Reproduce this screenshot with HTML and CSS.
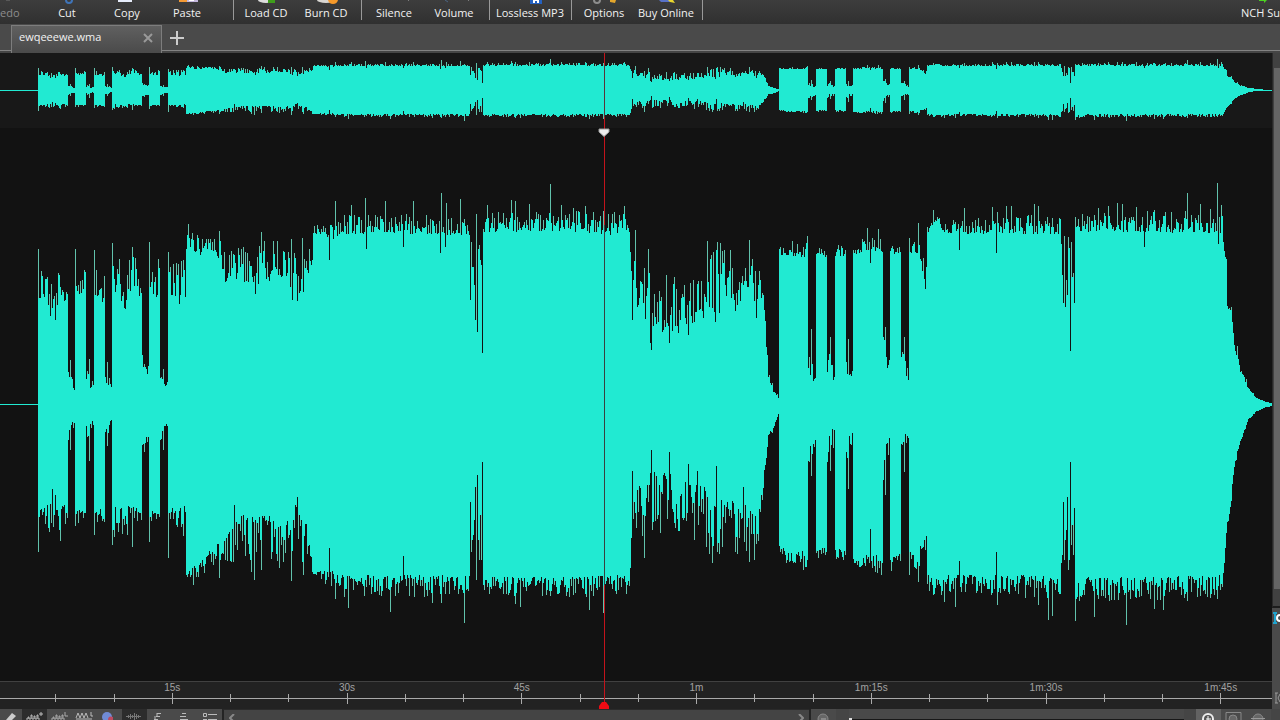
FILE: index.html
```html
<!DOCTYPE html>
<html lang="en">
<head>
<meta charset="utf-8">
<title>ewqeeewe.wma</title>
<link rel="stylesheet" href="styles.css">
</head>
<body>
<div class="app">
  <header class="toolbar">
    <button class="tool dim"><svg class="ticon" viewBox="0 0 30 6"><path d="M14 0h4" stroke="#777"/></svg>Redo</button>
    <button class="tool"><svg class="ticon" viewBox="0 0 30 6"><circle cx="17" cy="0" r="3" fill="none" stroke="#3f74b8" stroke-width="2"/></svg>Cut</button>
    <button class="tool"><svg class="ticon" viewBox="0 0 30 6"><path d="M6 0h14v2H6z" fill="#e6ecfa"/></svg>Copy</button>
    <button class="tool"><svg class="ticon" viewBox="0 0 30 6"><path d="M7 0h8v2H7z" fill="#f39a35"/><path d="M15 0h11v2H15z" fill="#c3b7dc"/><path d="M17 0h5v1h-5z" fill="#fff"/></svg>Paste</button>
    <span class="sep after-edit"></span>
    <button class="tool"><svg class="ticon" viewBox="0 0 30 6"><ellipse cx="15" cy="0" rx="8" ry="3" fill="#ddd"/><path d="M17 0h7v3h-7z" fill="#3f9d1b"/></svg>Load CD</button>
    <button class="tool"><svg class="ticon" viewBox="0 0 30 6"><ellipse cx="15" cy="0" rx="9" ry="3" fill="#d9d6d2"/><path d="M17 0h10q-1 4-5 4t-5-4" fill="#f6992a"/></svg>Burn CD</button>
    <span class="sep after-pair"></span>
    <button class="tool"><svg class="ticon" viewBox="0 0 30 6"><path d="M29 0h1" stroke="#bbb"/></svg>Silence</button>
    <button class="tool"><svg class="ticon" viewBox="0 0 30 6"><path d="M6 0l3 2" stroke="#4b6582"/><path d="M29 0h1" stroke="#bbb"/></svg>Volume</button>
    <span class="sep after-pair"></span>
    <button class="tool wide"><svg class="ticon" viewBox="0 0 30 6"><path d="M15 0h12v4H15z" fill="#2461c0"/><path d="M18 0h6v3h-6z" fill="#fff"/><path d="M20 1h2v2h-2z" fill="#2461c0"/></svg>Lossless MP3</button>
    <span class="sep after-wide"></span>
    <button class="tool"><svg class="ticon" viewBox="0 0 30 6"><circle cx="8" cy="0" r="3" fill="none" stroke="#8d8d8d" stroke-width="2"/><path d="M21 0h6l-1 3-5-1z" fill="#e3a62c"/></svg>Options</button>
    <button class="tool buy"><svg class="ticon" viewBox="0 0 30 6"><path d="M8 0h14v2H10z" fill="#5872c8"/><path d="M17 0h5l2 3-5-1z" fill="#ead72e"/></svg>Buy Online</button>
    <span class="sep after-buy"></span>
    <button class="tool suite"><svg class="ticon" viewBox="0 0 30 6"><path d="M7 0h8l-3 3v-2H7z" fill="#4bd321"/></svg>NCH Suite</button>
  </header>

  <nav class="tabs">
    <div class="tab"><button class="tab-name">ewqeeewe.wma</button><button class="icon-btn" aria-label="Close tab"><svg width="10" height="10" viewBox="0 0 10 10"><path d="M1 1l8 8M9 1L1 9" stroke="#999" stroke-width="2"/></svg></button></div>
    <button class="icon-btn add" aria-label="New tab"><svg width="14" height="14" viewBox="0 0 14 14"><path d="M7 0v14M0 7h14" stroke="#ccc" stroke-width="2"/></svg></button>
  </nav>

  <div class="work">
    <main class="stage">
      <svg class="overview" id="overview" viewBox="0 0 1272 75" preserveAspectRatio="none"></svg>
      <svg class="wave" id="wave" viewBox="0 0 1272 553" preserveAspectRatio="none"></svg>
      <svg class="ruler" id="ruler"></svg>
      <div class="playhead">
        <svg class="grip" viewBox="0 0 12 9"><path d="M1 1h10v3L6 8.500 1 4z" fill="#eee" stroke="#999"/></svg>
        <svg class="foot" viewBox="0 0 10 7"><path d="M0 7V4L3 0h4l3 4v3z" fill="#ee0b14"/></svg>
      </div>
    </main>
    <aside class="rail">
      <div class="track"><div class="thumb"></div></div>
      <div class="vtools">
        <svg width="7" height="14" viewBox="0 0 7 14"><path d="M2 2v10M0 2h4M0 12h4" stroke="#20a3cd" stroke-width="2"/><circle cx="7" cy="7" r="3" fill="none" stroke="#fff" stroke-width="2"/></svg>
        <svg width="5" height="14" viewBox="0 0 5 14"><path d="M1 2v10M0 2h3M0 12h3M5 3L3 7l2 4" fill="none" stroke="#999"/></svg>
      </div>
    </aside>
  </div>

  <footer class="bottom">
    <button class="mode first" aria-label="Edit"><svg viewBox="0 0 25 11"><path d="M6 11l6-7 4 3-4 4z" fill="#ccc"/></svg></button>
    <button class="mode on" aria-label="Wave"><svg viewBox="0 0 25 11"><path d="M4 10h2V8h1v2h2V6h1v4h2V7h1v3h2V6h1v4h2M17 5h4M19 3v4" fill="none" stroke="#bbb"/></svg></button>
    <button class="mode" aria-label="Wave left"><svg viewBox="0 0 25 11"><path d="M4 10h2V8h1v2h2V6h1v4h2V7h1v3h2V6h1v4h2M18 3v4h3" fill="none" stroke="#aaa"/></svg></button>
    <button class="mode" aria-label="Peaks"><svg viewBox="0 0 25 11"><path d="M4 9l2-5 2 5 2-5 2 5 2-5 2 5M19 3v4h2M4 10h16" fill="none" stroke="#bbb"/></svg></button>
    <button class="mode" aria-label="Spectral"><svg viewBox="0 0 25 11"><circle cx="10" cy="8" r="5" fill="#718bd5"/><path d="M11 11q0-5 5-3v3z" fill="#bd4a60"/></svg></button>
    <button class="mode on" aria-label="Level"><svg viewBox="0 0 25 11"><path d="M4 7.500h15M6.500 6v3M8.500 5v5M10.500 6v3M12.500 4v7M14.500 5v5M16.500 6v3" stroke="#777"/></svg></button>
    <button class="mode" aria-label="Fade"><svg viewBox="0 0 25 11"><path d="M14 4.500h-4M9 7.500h4M7 10.500h4M10 4v3M8 7v3" fill="none" stroke="#bbb"/></svg></button>
    <button class="mode" aria-label="Steps"><svg viewBox="0 0 25 11"><path d="M10 4.500h4M8 7.500h6M8 10.500h8" stroke="#bbb"/></svg></button>
    <button class="mode" aria-label="List"><svg viewBox="0 0 25 11"><path d="M6.500 4.500h3v3h-3zM6 10.500h4M11 5.500h9M11 10.500h9" fill="none" stroke="#bbb"/></svg></button>
    <div class="hscroll">
      <button class="icon-btn" aria-label="Scroll left"><svg width="7" height="8" viewBox="0 0 7 8"><path d="M5 0L1 4l4 4" fill="none" stroke="#888" stroke-width="2"/></svg></button>
      <button class="icon-btn" aria-label="Scroll right"><svg width="7" height="8" viewBox="0 0 7 8"><path d="M2 0l4 4-4 4" fill="none" stroke="#888" stroke-width="2"/></svg></button>
    </div>
    <div class="zoom">
      <button class="mode" aria-label="Zoom out"><svg viewBox="0 0 25 11"><circle cx="12" cy="10" r="5" fill="#666" stroke="#888"/><path d="M10 10h5" stroke="#aaa"/></svg></button>
      <div class="slider"><span class="knob"></span></div>
      <button class="mode lit" aria-label="Zoom in"><svg viewBox="0 0 25 11"><circle cx="12" cy="10" r="5" fill="#555" stroke="#eee" stroke-width="2"/><path d="M10 10h5M12 7v4" stroke="#fff"/></svg></button>
      <button class="mode" aria-label="Zoom all"><svg viewBox="0 0 25 11"><path d="M5 11V3.500h15V11" fill="none" stroke="#888"/><circle cx="12" cy="10" r="4" fill="#666" stroke="#888"/></svg></button>
      <button class="mode" aria-label="Zoom selection"><svg viewBox="0 0 25 11"><circle cx="12" cy="10" r="5" fill="#666" stroke="#888"/><path d="M5 9.500h14" stroke="#999"/></svg></button>
    </div>
  </footer>
</div>
<script src="app.js"></script>
</body>
</html>
```
FILE: styles.css
```css
* { box-sizing: border-box; }
body {
  margin: 0;
  background: #121212;
  color: #f2f2f2;
  font: 11px/14px "Open Sans", "Noto Sans", sans-serif;
}
button {
  margin: 0;
  padding: 0;
  border: 0;
  background: none;
  color: inherit;
  font: inherit;
}
svg { display: block; }
.app {
  display: flex;
  flex-direction: column;
  height: 100vh;
  overflow: hidden;
}
.toolbar {
  display: flex;
  flex: none;
  height: 24px;
  padding-bottom: 4px;
  background: linear-gradient(#3d3d3d, #303030);
  overflow: hidden;
}
.tool {
  display: flex;
  flex: none;
  flex-direction: column;
  align-items: center;
  width: 60px;
  white-space: nowrap;
}
.tool:first-child { margin-left: -24px; width: 61px; }
.dim { color: #8d8d8d; }
.ticon { width: 30px; height: 6px; }
.wide { width: 76px; }
.buy { width: 64px; }
.suite { margin: 0 -17px 0 auto; }
.sep { flex: none; width: 1px; background: #999; }
.after-edit { margin: 0 2px 0 16px; }
.after-pair { margin: 0 2px 0 5px; }
.after-wide { margin: 0 2px 0 3px; }
.after-buy { margin-left: 4px; }
.tabs {
  display: flex;
  flex: none;
  height: 29px;
  padding: 1px 0 0 11px;
  background: linear-gradient(#4a4a4a 26px, #838383 26px, #838383 27px, #454545 27px);
}
.tab {
  display: flex;
  align-items: center;
  justify-content: space-between;
  width: 151px;
  padding: 0 8px 3px 7px;
  border: 1px solid #7d7d7d;
  border-bottom: 0;
  background: linear-gradient(#606060, #4a4a4a);
}
.tab-name { padding-bottom: 3px; }
.add { padding: 0 8px 3px; }
.work { display: flex; flex: 1; min-height: 0; }
.stage {
  position: relative;
  display: flex;
  flex: 1;
  flex-direction: column;
  min-width: 0;
}
.overview { flex: none; width: 100%; height: 75px; background: #181818; }
.wave { flex: 1; width: 100%; min-height: 0; background: #121212; }
.ruler {
  flex: none;
  width: 100%;
  height: 28px;
  border-top: 1px solid #414141;
  background: #222;
}
.ruler text {
  fill: #a3a3a3;
  font: 10px "Liberation Sans", Arial, sans-serif;
  text-anchor: middle;
}
.ruler line { stroke: #aaa; shape-rendering: crispEdges; }
.peaks { fill: #61c2ac; shape-rendering: crispEdges; }
.core { fill: #21ead2; shape-rendering: crispEdges; }
.playhead {
  position: absolute;
  top: 0;
  bottom: 0;
  left: 47.5%;
  width: 1px;
  background: linear-gradient(#c3141c 12px, #57343a 12px, #57343a 64px, #c3141c 64px, #c3141c 172px, #37403f 172px, #37403f 532px, #c3141c 532px);
}
.grip { position: absolute; top: 75px; left: -6px; width: 12px; height: 9px; }
.foot { position: absolute; bottom: 0; left: -5px; width: 10px; height: 7px; }
.rail {
  display: flex;
  flex: none;
  flex-direction: column;
  width: 8px;
  background: #4a4a4a;
}
.track {
  flex: 1;
  padding: 15px 0 17px 1px;
  border-left: 1px solid #292929;
  border-bottom: 2px solid #1d1d1d;
  background: #414141;
}
.thumb { height: 100%; background: #656565; }
.vtools {
  display: flex;
  flex: none;
  flex-direction: column;
  justify-content: space-between;
  align-items: flex-end;
  height: 101px;
  padding: 3px 0 4px;
}
.bottom {
  display: flex;
  flex: none;
  height: 11px;
  background: #454545;
  overflow: hidden;
}
.mode { flex: none; width: 25px; background: #4a4a4a; }
.mode svg { width: 25px; height: 11px; }
.first { width: 22px; }
.on { background: #2c2c2c; }
.lit { background: #626262; }
.hscroll {
  display: flex;
  flex: 1;
  align-items: flex-end;
  justify-content: space-between;
  padding: 0 5px;
  border-left: 2px solid #242424;
  border-top: 1px solid #2a2a2a;
  background: #444;
}
.hscroll .icon-btn { height: 6px; }
.zoom {
  display: flex;
  flex: none;
  width: 471px;
  padding-right: 9px;
  border-left: 2px solid #242424;
}
.slider {
  flex: 1;
  padding: 9px 0 0 13px;
  border-right: 12px solid #454545;
  background: linear-gradient(90deg, #454545 13px, transparent 13px), linear-gradient(#494949 10px, #181818 10px);
}
.knob { display: block; width: 3px; height: 2px; background: #ddd; }
```
FILE: app.js
```js
// Envelope control points: x, top peak, top body, bottom body, bottom peak.
const envelope = [
  [0,404,404,404,404],[37,404,404,404,404],
  [38,265,298,510,530],[52,275,310,500,532],[67,258,300,505,528],
  [68,365,380,430,440],[74,375,392,416,426],
  [75,270,300,510,522],[85,268,292,508,522],[86,362,385,425,440],[93,378,392,418,425],
  [94,268,295,508,522],[104,275,304,508,522],[105,364,384,424,440],[111,380,390,418,424],
  [112,258,290,505,538],[125,258,310,505,540],[133,245,290,505,540],[141,275,300,510,520],
  [142,352,366,444,460],[148,366,376,430,440],
  [149,265,292,510,528],[159,264,300,510,524],[160,370,380,430,440],[167,378,390,420,426],
  [168,252,295,508,535],[185,252,300,505,535],
  [186,230,250,568,584],[200,236,256,562,576],[212,238,258,545,567],[225,238,285,535,570],
  [240,242,285,510,560],[260,238,285,515,570],[280,242,280,515,562],[300,238,295,500,565],
  [308,242,280,515,575],[312,246,260,560,572],[313,225,233,570,580],[333,222,240,570,586],
  [340,212,234,574,596],[400,214,234,574,596],[468,217,235,574,598],[469,230,236,560,582],
  [482,353,353,462,462],[483,212,232,576,597],[560,211,231,576,597],[629,212,236,574,594],
  [630,240,260,560,570],[632,250,305,490,540],[645,255,320,480,545],[665,275,335,470,535],
  [685,280,332,480,530],[700,278,320,480,548],[710,248,315,490,555],[740,252,310,500,555],
  [758,260,300,510,560],[761,285,300,490,530],[763,294,295,475,492],[766,333,350,455,475],
  [768,373,378,433,440],[773,385,392,418,430],[778,396,398,412,414],
  [779,246,256,545,560],[792,238,256,552,568],[807,243,258,548,570],
  [808,350,375,440,475],[815,368,384,425,445],[816,246,256,550,565],[826,250,257,545,562],
  [827,345,372,435,470],[834,362,382,425,445],[835,244,256,548,562],[845,246,257,545,560],
  [846,345,375,440,480],[852,370,388,430,440],[853,246,256,552,568],[865,236,250,552,570],
  [882,236,252,550,574],[883,330,355,450,490],[889,355,374,435,450],[890,241,254,550,570],
  [900,243,253,550,568],[901,340,362,440,470],[908,365,382,428,440],[909,242,256,550,567],
  [919,238,256,560,572],[920,255,262,545,560],[926,260,290,535,565],[927,225,233,574,588],
  [936,214,222,578,596],[945,220,234,574,594],[1060,212,234,574,598],[1061,235,245,560,575],
  [1074,300,303,508,520],[1075,214,232,576,600],[1150,210,232,576,600],[1222,212,234,574,596],
  [1224,248,252,562,570],[1226,258,262,530,540],[1227,304,307,520,528],[1231,306,315,490,500],
  [1234,343,348,460,468],[1240,366,372,440,442],[1248,387,389,418,420],[1256,397,398,410,411],
  [1265,402,402,406,407],[1272,403,403,405,405]
];

// Single columns that stand out: x, top, bottom (0 keeps the envelope value).
const columns = [
  [38,249,552],[52,0,489],[55,320,495],[50,316,0],[60,0,541],[70,360,450],[75,249,526],[89,359,461],
  [94,250,535],[107,362,446],[112,243,545],[124,308,0],[132,247,547],[149,242,542],[158,259,0],
  [163,369,450],[168,252,558],[179,304,0],[188,224,0],[193,0,585],[219,231,578],[234,0,505],[251,0,572],
  [254,0,580],[255,294,0],[261,232,570],[277,241,0],[279,0,568],[291,239,581],[292,300,0],[297,301,497],
  [302,238,0],[303,292,575],[329,260,548],[335,201,599],[348,0,608],[351,205,0],[365,198,0],
  [366,249,0],[385,201,0],[390,0,612],[403,247,556],[413,201,0],[432,0,603],[440,253,0],[441,193,603],
  [445,247,0],[446,203,0],[460,199,0],[464,0,623],
  [470,300,502],[471,242,552],[473,267,535],[474,285,520],[475,320,487],[476,214,580],[477,332,475],
  [478,249,540],[479,245,560],[480,260,515],[481,265,560],[472,267,540],[482,353,462],
  [487,205,0],[511,200,0],[515,201,604],[520,0,607],[529,204,0],[550,184,596],[561,205,0],[573,208,0],
  [585,206,0],[589,0,610],[603,211,613],[624,206,0],[632,320,471],[635,230,0],[644,0,558],[648,249,0],
  [650,343,473],[651,350,450],[654,0,472],[663,330,0],[669,343,452],[688,335,464],[697,0,471],
  [707,241,0],[712,0,563],[715,322,0],[716,250,466],[717,242,0],[720,243,0],[730,250,0],[743,0,487],
  [749,240,562],[754,0,560],[756,318,0],[807,236,560],[811,329,476],[830,337,471],[848,339,489],
  [867,228,0],[870,263,529],[878,229,0],[885,327,495],[904,337,472],[909,238,575],[918,223,582],
  [925,289,0],[933,210,595],[944,0,602],[955,0,607],[959,250,561],[964,208,0],[992,207,0],
  [996,253,552],[997,212,605],[1006,206,0],[1011,206,0],[1034,204,0],[1038,206,605],[1048,0,620],[1052,0,616],
  [1062,275,555],[1063,303,502],[1064,236,560],[1065,307,540],[1066,280,530],[1067,295,497],
  [1068,237,570],[1069,248,560],[1070,351,462],[1071,242,545],[1072,277,525],[1073,273,555],
  [1074,303,508],[1075,217,621],[1094,0,617],[1098,208,0],[1108,206,0],[1117,203,0],[1122,204,0],
  [1126,0,625],[1136,207,0],[1144,247,0],[1154,0,609],[1163,0,610],[1187,193,601],[1200,204,0],
  [1210,209,0],[1217,183,599],[1218,244,0],[1221,205,0],[1237,346,0],[1246,379,0]
];

let seed = 20;
function random() {
  seed = (seed * 1664525 + 1013904223) % 4294967296;
  return seed / 4294967296;
}

const tops = [], bottoms = [];
let k = 0;
for (let x = 0; x < 1272; x++) {
  while (envelope[k + 1][0] <= x) k++;
  const a = envelope[k], b = envelope[k + 1];
  const t = (x - a[0]) / (b[0] - a[0]);
  const v = [1, 2, 3, 4].map(i => a[i] + (b[i] - a[i]) * t);
  tops.push(Math.round(v[1] - (v[1] - v[0]) * random() ** 1.5));
  bottoms.push(Math.round(v[2] + (v[3] - v[2]) * random() ** 1.5) + 1);
}
for (const [x, t, b] of columns) {
  if (t) tops[x] = t;
  if (b) bottoms[x] = b;
}

const core = (list, outer, inner) => list.map((y, i) =>
  outer(y, inner(list[i - 1] ?? y, list[i + 1] ?? y)));
const coreTops = core(tops, Math.max, Math.min);
const coreBottoms = core(bottoms, Math.min, Math.max);

function shape(upper, lower, map) {
  let d = "";
  upper.forEach((t, x) => {
    const y = map(t), end = Math.max(y + 1, map(lower[x]));
    d += `M${x} ${y}h1V${end}h-1z`;
  });
  return d;
}
function draw(id, map) {
  document.getElementById(id).innerHTML =
    `<path class="peaks" d="${shape(tops, bottoms, map)}"/>` +
    `<path class="core" d="${shape(coreTops, coreBottoms, map)}"/>`;
}
draw("wave", y => y - 128);
draw("overview", y => Math.round(37 + (y - 404) * 0.14));

const labels = ["15s", "30s", "45s", "1m", "1m:15s", "1m:30s", "1m:45s"];
let marks = '<line x1="0" x2="100%" y1="16.5" y2="16.5"/>';
for (let i = 1; i <= 21; i++) {
  const x = (i * 58.25 - 2.5) / 12.72 + "%";
  const major = i % 3 === 0;
  marks += `<line x1="${x}" x2="${x}" y1="${major ? 11 : 12}" y2="${major ? 22 : 20}"/>`;
  if (major) marks += `<text x="${x}" y="9">${labels[i / 3 - 1]}</text>`;
}
document.getElementById("ruler").innerHTML = marks;
```
